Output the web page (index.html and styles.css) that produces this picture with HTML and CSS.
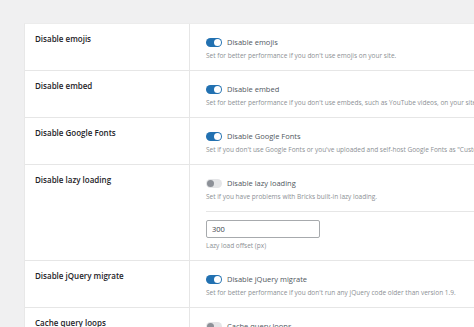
FILE: index.html
```html
<!DOCTYPE html>
<html>
<head>
    <meta charset="utf-8">
    <title>Performance</title>
    <link rel="stylesheet" href="styles.css">
</head>
<body>
    <div class="settings">
        <div class="row">
            <div class="title">Disable emojis</div>
            <div class="field">
                <label class="switch"><span class="toggle on"></span>Disable emojis</label>
                <p class="desc">Set for better performance if you don't use emojis on your site.</p>
            </div>
        </div>
        <div class="row">
            <div class="title">Disable embed</div>
            <div class="field">
                <label class="switch"><span class="toggle on"></span>Disable embed</label>
                <p class="desc">Set for better performance if you don't use embeds, such as YouTube videos, on your site.</p>
            </div>
        </div>
        <div class="row">
            <div class="title">Disable Google Fonts</div>
            <div class="field">
                <label class="switch"><span class="toggle on"></span>Disable Google Fonts</label>
                <p class="desc">Set if you don't use Google Fonts or you've uploaded and self-host Google Fonts as "Custom Fonts".</p>
            </div>
        </div>
        <div class="row">
            <div class="title">Disable lazy loading</div>
            <div class="field">
                <label class="switch"><span class="toggle"></span>Disable lazy loading</label>
                <p class="desc">Set if you have problems with Bricks built-in lazy loading.</p>
                <div class="sub">
                    <input class="text" type="text" value="300">
                    <p class="desc">Lazy load offset (px)</p>
                </div>
            </div>
        </div>
        <div class="row">
            <div class="title">Disable jQuery migrate</div>
            <div class="field">
                <label class="switch"><span class="toggle on"></span>Disable jQuery migrate</label>
                <p class="desc">Set for better performance if you don't run any jQuery code older than version 1.9.</p>
            </div>
        </div>
        <div class="row">
            <div class="title">Cache query loops</div>
            <div class="field">
                <label class="switch"><span class="toggle"></span>Cache query loops</label>
                <p class="desc">Cache query loop results.</p>
            </div>
        </div>
    </div>
</body>
</html>
```

FILE: styles.css
```css
html, body
{
    margin: 0;
    padding: 0;
    background: #f0f0f1;
    overflow: hidden;
    height: 100%;
}

body
{
    font-family: "Open Sans", "Noto Sans", sans-serif;
    color: #3c434a;
    padding: 23px 0 0 24px;
}

.settings
{
    width: 560px;
    background: #fff;
    border-left: 1px solid #e8e8e8;
    border-top: 1px solid #ececec;
}

.row
{
    display: grid;
    grid-template-columns: 164px 1fr;
    border-bottom: 1px solid #e6e6e6;
}

.title
{
    padding: 9px 10px 0 10px;
    font-size: 8px;
    font-weight: 600;
    color: #1d2327;
    line-height: 12px;
}

.field
{
    border-left: 1px solid #e6e6e6;
    padding: 12px 0 9px 16px;
}

.switch
{
    display: flex;
    align-items: center;
    gap: 5px;
    font-size: 7.5px;
    line-height: 12px;
    color: #50575e;
}

.toggle
{
    position: relative;
    width: 16px;
    height: 9px;
    border-radius: 5px;
    background: #e4e5e7;
}

.toggle::after
{
    content: "";
    position: absolute;
    top: 1px;
    left: 1px;
    width: 7px;
    height: 7px;
    border-radius: 50%;
    background: #8c9097;
}

.toggle.on
{
    background: #2271b1;
}

.toggle.on::after
{
    left: 8px;
    background: #fff;
}

.desc
{
    margin: 3px 0 0 0;
    font-size: 6.5px;
    line-height: 10px;
    color: #8c8f94;
    white-space: nowrap;
}

.sub
{
    margin-top: 9px;
    padding-top: 8px;
    border-top: 1px solid #e6e6e6;
}

.text
{
    display: block;
    box-sizing: border-box;
    width: 114px;
    height: 18px;
    margin: 0;
    padding: 0 5px;
    border: 1px solid #a7aaad;
    border-radius: 2px;
    font-family: inherit;
    font-size: 7.5px;
    color: #3c434a;
}
```
